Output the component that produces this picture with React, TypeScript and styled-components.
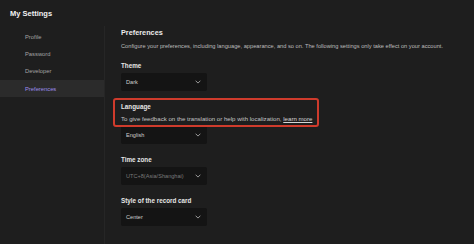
import styled, { createGlobalStyle } from "styled-components";

const GlobalStyle = createGlobalStyle`
  html, body {
    margin: 0;
    padding: 0;
    background: #1e1e1e;
  }
  body {
    font-family: "Liberation Sans", Arial, sans-serif;
  }
`;

const Window = styled.div`
  width: 474px;
  height: 244px;
  background: #1e1e1e;
  display: flex;
  flex-direction: column;
  overflow: hidden;
`;

const Header = styled.div`
  height: 26px;
  display: flex;
  align-items: center;
  padding-left: 10px;
  font-size: 7.5px;
  font-weight: 700;
  color: #f2f2f2;
  flex-shrink: 0;
`;

const Body = styled.div`
  flex: 1;
  display: flex;
`;

const Sidebar = styled.nav`
  width: 104px;
  padding-top: 2px;
  border-right: 1px solid #262626;
  display: flex;
  flex-direction: column;
`;

interface NavItemProps {
  $active?: boolean;
}

const NavItem = styled.div<NavItemProps>`
  height: 17.3px;
  display: flex;
  align-items: center;
  padding-left: 25px;
  font-size: 5.8px;
  color: ${({ $active }) => ($active ? "#9c8ded" : "#a3a3a3")};
  background: ${({ $active }) => ($active ? "#2b2b2b" : "transparent")};
`;

const Main = styled.main`
  flex: 1;
  padding: 2px 0 0 16px;
  display: flex;
  flex-direction: column;
`;

const Title = styled.h2`
  margin: 0;
  font-size: 7.3px;
  line-height: 10px;
  font-weight: 700;
  color: #ececec;
`;

const Description = styled.p`
  margin: 4px 0 0;
  font-size: 5.7px;
  line-height: 8px;
  color: #bdbdbd;
  white-space: nowrap;
`;

const Field = styled.div`
  margin-top: 11px;
  display: flex;
  flex-direction: column;
  align-items: flex-start;
`;

const Label = styled.div`
  font-size: 6.3px;
  line-height: 9px;
  font-weight: 700;
  color: #e6e6e6;
`;

const Highlight = styled.div`
  position: relative;

  &::after {
    content: "";
    position: absolute;
    top: -4px;
    left: -8px;
    right: -7px;
    bottom: -4px;
    border: 2px solid #cf3b2c;
    border-radius: 3px;
    pointer-events: none;
  }
`;

const Hint = styled.div`
  margin-top: 4px;
  font-size: 6.1px;
  line-height: 8px;
  color: #c4c4c4;
  white-space: nowrap;

  a {
    color: #d6d6d6;
    text-decoration: underline;
  }
`;

interface SelectProps {
  $disabled?: boolean;
}

const Select = styled.div<SelectProps>`
  margin-top: 3px;
  width: 86px;
  height: 18px;
  box-sizing: border-box;
  padding: 0 6px 0 5px;
  background: #141414;
  border-radius: 2px;
  display: flex;
  align-items: center;
  justify-content: space-between;
  font-size: 5.6px;
  color: ${({ $disabled }) => ($disabled ? "#7a7a7a" : "#cfcfcf")};
`;

const Chevron = () => (
  <svg width="6" height="4" viewBox="0 0 6 4" fill="none">
    <path d="M0.6 0.7 L3 3.1 L5.4 0.7" stroke="#a8a8a8" strokeWidth="0.9" />
  </svg>
);

const navItems = ["Profile", "Password", "Developer", "Preferences"];

export default function App() {
  return (
    <>
      <GlobalStyle />
      <Window>
        <Header>My Settings</Header>
        <Body>
          <Sidebar>
            {navItems.map((item) => (
              <NavItem key={item} $active={item === "Preferences"}>
                {item}
              </NavItem>
            ))}
          </Sidebar>
          <Main>
            <Title>Preferences</Title>
            <Description>
              Configure your preferences, including language, appearance, and so on. The following settings only take
              effect on your account.
            </Description>

            <Field>
              <Label>Theme</Label>
              <Select>
                Dark
                <Chevron />
              </Select>
            </Field>

            <Field>
              <Highlight>
                <Label>Language</Label>
                <Hint>
                  To give feedback on the translation or help with localization, <a>learn more</a>
                </Hint>
              </Highlight>
              <Select>
                English
                <Chevron />
              </Select>
            </Field>

            <Field>
              <Label>Time zone</Label>
              <Select $disabled>
                UTC+8(Asia/Shanghai)
                <Chevron />
              </Select>
            </Field>

            <Field>
              <Label>Style of the record card</Label>
              <Select>
                Center
                <Chevron />
              </Select>
            </Field>
          </Main>
        </Body>
      </Window>
    </>
  );
}
